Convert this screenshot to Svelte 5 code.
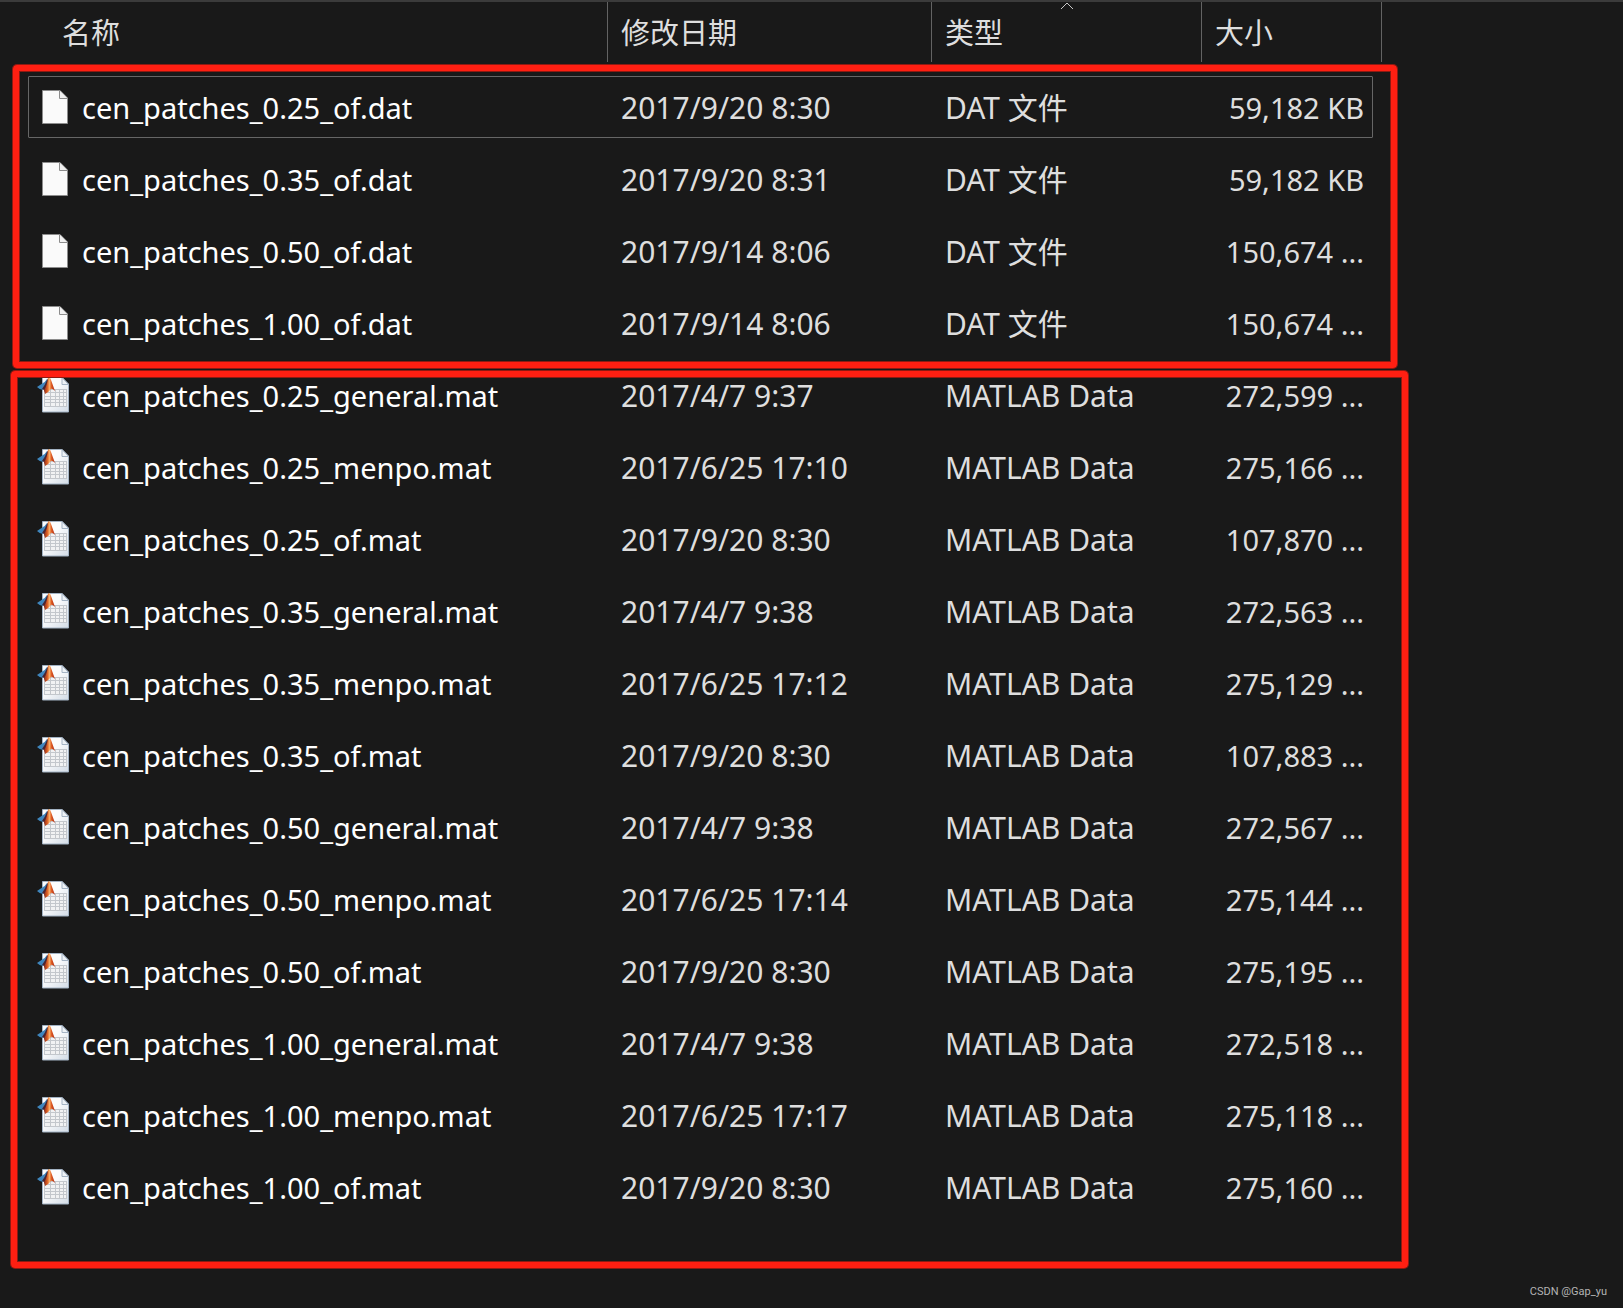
<script lang="ts">
  type FileRow = { name: string; date: string; type: string; size: string };

  const datFiles: FileRow[] = [
    { name: 'cen_patches_0.25_of.dat', date: '2017/9/20 8:30', type: 'DAT 文件', size: '59,182 KB' },
    { name: 'cen_patches_0.35_of.dat', date: '2017/9/20 8:31', type: 'DAT 文件', size: '59,182 KB' },
    { name: 'cen_patches_0.50_of.dat', date: '2017/9/14 8:06', type: 'DAT 文件', size: '150,674 ...' },
    { name: 'cen_patches_1.00_of.dat', date: '2017/9/14 8:06', type: 'DAT 文件', size: '150,674 ...' }
  ];

  const matFiles: FileRow[] = [
    { name: 'cen_patches_0.25_general.mat', date: '2017/4/7 9:37', type: 'MATLAB Data', size: '272,599 ...' },
    { name: 'cen_patches_0.25_menpo.mat', date: '2017/6/25 17:10', type: 'MATLAB Data', size: '275,166 ...' },
    { name: 'cen_patches_0.25_of.mat', date: '2017/9/20 8:30', type: 'MATLAB Data', size: '107,870 ...' },
    { name: 'cen_patches_0.35_general.mat', date: '2017/4/7 9:38', type: 'MATLAB Data', size: '272,563 ...' },
    { name: 'cen_patches_0.35_menpo.mat', date: '2017/6/25 17:12', type: 'MATLAB Data', size: '275,129 ...' },
    { name: 'cen_patches_0.35_of.mat', date: '2017/9/20 8:30', type: 'MATLAB Data', size: '107,883 ...' },
    { name: 'cen_patches_0.50_general.mat', date: '2017/4/7 9:38', type: 'MATLAB Data', size: '272,567 ...' },
    { name: 'cen_patches_0.50_menpo.mat', date: '2017/6/25 17:14', type: 'MATLAB Data', size: '275,144 ...' },
    { name: 'cen_patches_0.50_of.mat', date: '2017/9/20 8:30', type: 'MATLAB Data', size: '275,195 ...' },
    { name: 'cen_patches_1.00_general.mat', date: '2017/4/7 9:38', type: 'MATLAB Data', size: '272,518 ...' },
    { name: 'cen_patches_1.00_menpo.mat', date: '2017/6/25 17:17', type: 'MATLAB Data', size: '275,118 ...' },
    { name: 'cen_patches_1.00_of.mat', date: '2017/9/20 8:30', type: 'MATLAB Data', size: '275,160 ...' }
  ];

  const groups = [
    { kind: 'dat', files: datFiles },
    { kind: 'mat', files: matFiles }
  ];

  const focused = 'cen_patches_0.25_of.dat';
</script>

<div class="explorer">
  <div class="list">
    <table>
      <colgroup>
        <col />
        <col class="col-date" />
        <col class="col-type" />
        <col class="col-size" />
      </colgroup>
      <thead>
        <tr>
          <th class="name"><button type="button">名称</button></th>
          <th><button type="button">修改日期</button></th>
          <th aria-sort="ascending">
            <button type="button">
              类型
              <svg class="sort" width="14" height="8" viewBox="0 0 14 8" aria-hidden="true">
                <path d="M1 7 L7 1 L13 7" fill="none" stroke="#c8c8c8" />
              </svg>
            </button>
          </th>
          <th><button type="button">大小</button></th>
        </tr>
      </thead>
      {#each groups as group}
        <tbody class={group.kind}>
          {#each group.files as file}
            <tr class:focused={focused === file.name}>
              <td class="name">
                <div class="file">
                  {#if group.kind === 'dat'}
                    <svg width="36" height="38" viewBox="0 0 36 38" aria-hidden="true">
                      <path d="M6.5 1.5 H24 L31.5 9 V34.5 H6.5 Z" fill="#fafafa" stroke="#8c8c8c" />
                      <path d="M23.5 1.5 V9.5 H31.5" fill="#f0f0f0" stroke="#8c8c8c" />
                    </svg>
                  {:else}
                    <svg width="36" height="38" viewBox="0 0 36 38" aria-hidden="true">
                      <defs>
                        <linearGradient id="paper" x1="0" y1="0" x2="1" y2="1">
                          <stop offset="0.4" stop-color="#fbfcfd" />
                          <stop offset="1" stop-color="#d3dce6" />
                        </linearGradient>
                        <linearGradient id="flame" x1="0" y1="0" x2="1" y2="0">
                          <stop offset="0" stop-color="#8a2a1c" />
                          <stop offset="0.3" stop-color="#dc5f22" />
                          <stop offset="0.5" stop-color="#f9b06a" />
                          <stop offset="0.7" stop-color="#d9531e" />
                          <stop offset="1" stop-color="#b03018" />
                        </linearGradient>
                      </defs>
                      <path d="M6.5 0.5 H26 L32.5 7 V35 H6.5 Z" fill="url(#paper)" stroke="#a3b3c4" />
                      <path d="M26 0.5 V7.5 H32.5 Z" fill="#eef2f6" stroke="#a3b3c4" />
                      <rect x="8" y="12" width="23" height="17" fill="#f1f2f3" />
                      <path
                        d="M8 12.5 H31 M8 15.5 H31 M8 19.5 H31 M8 22.5 H31 M8 25.5 H31 M8 29.5 H31 M8.5 12 V29 M14.5 12 V29 M19.5 12 V29 M23.5 12 V29 M27.5 12 V29 M30.5 12 V29"
                        fill="none"
                        stroke="#c3c7cc"
                      />
                      <path d="M1 10 L7 6 Q9 5 11 2 L12 7 L7 13 Q4 13 1 10 Z" fill="#3f86bd" />
                      <path d="M6 12 Q9 8 11 3 L13 0 L13 10 L9 15 Q8 12 6 12 Z" fill="#4a2733" />
                      <path d="M8 13 Q11 9 12 1 L13 0 Q14 0 15 3 L19 14 Q16 11 15 12 Q12 16 9 17 Z" fill="url(#flame)" />
                    </svg>
                  {/if}
                  <span>{file.name}</span>
                </div>
              </td>
              <td class="date">{file.date}</td>
              <td class="type">{file.type}</td>
              <td class="size">{file.size}</td>
            </tr>
          {/each}
        </tbody>
      {/each}
    </table>
  </div>
  <footer>CSDN @Gap_yu</footer>
</div>

<style>
  :global(body) {
    margin: 0;
    background: #191919;
  }

  .explorer {
    display: flex;
    flex-direction: column;
    box-sizing: border-box;
    min-height: 100vh;
    border-top: 2px solid #3b3b3b;
    color: #dedede;
    font-family: 'Noto Sans', 'Noto Sans CJK SC', sans-serif;
    font-size: 29px;
    line-height: 40px;
  }

  .list {
    padding-right: 241px;
  }

  table {
    width: 100%;
    table-layout: fixed;
    border-collapse: collapse;
  }

  .col-date {
    width: 324px;
  }

  .col-type {
    width: 270px;
  }

  .col-size {
    width: 180px;
  }

  th {
    padding: 0 0 9px;
    font-weight: normal;
  }

  th button {
    position: relative;
    display: block;
    box-sizing: border-box;
    width: 100%;
    height: 60px;
    padding: 2px 0 0 13px;
    border: 0;
    border-right: 1px solid #636363;
    background: none;
    color: inherit;
    font: inherit;
    text-align: left;
  }

  th.name button {
    padding-left: 62px;
  }

  .sort {
    position: absolute;
    top: 0;
    left: 50%;
    transform: translateX(-50%);
  }

  tbody {
    position: relative;
  }

  /* red marker frame, drawn once per group over its rows */
  tr:last-child .size::after {
    content: '';
    position: absolute;
    border: 6px solid #ff1f12;
    border-radius: 4px;
    box-shadow: 0 0 0 1px #8e1a12, inset 0 0 0 1px #8e1a12;
    pointer-events: none;
  }

  .dat tr:last-child .size::after {
    inset: -6px -15px -9px 13px;
  }

  .mat tr:last-child .size::after {
    inset: 12px -26px -45px 11px;
  }

  .focused {
    position: relative;
  }

  .focused .name::after {
    content: '';
    position: absolute;
    inset: 5px 9px 5px 28px;
    border: 1px solid #666;
    border-radius: 1px;
    pointer-events: none;
  }

  td {
    box-sizing: border-box;
    height: 72px;
    padding: 2px 0 0 13px;
    white-space: nowrap;
  }

  td.name {
    padding-left: 36px;
    color: #fff;
  }

  td.date,
  td.type {
    font-size: 30px;
  }

  td.size {
    padding-right: 18px;
    padding-left: 0;
    text-align: right;
  }

  .file {
    display: flex;
    align-items: center;
    gap: 10px;
  }

  .file svg {
    flex: none;
  }

  footer {
    margin-top: auto;
    padding: 0 16px 8px 0;
    color: #b4b4b4;
    font-family: Roboto, sans-serif;
    font-size: 11px;
    line-height: 16px;
    text-align: right;
  }
</style>
